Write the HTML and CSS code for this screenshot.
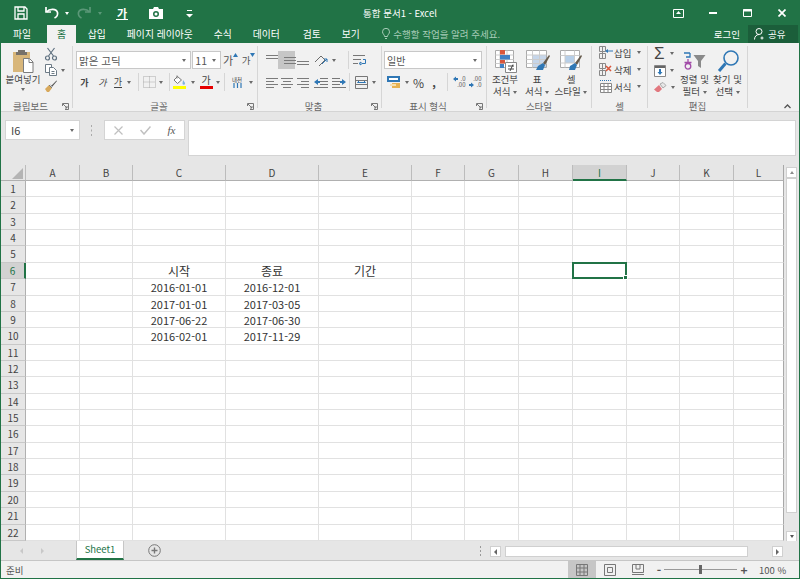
FILE: index.html
```html
<!DOCTYPE html>
<html lang="ko">
<head>
<meta charset="utf-8">
<title>통합 문서1 - Excel</title>
<link rel="stylesheet" href="styles.css">
</head>
<body>
<div class="window">
  <header class="titlebar">
    <div class="qat">
      <svg width="16" height="16" viewBox="0 0 16 16" fill="none" stroke="#fff" stroke-width="1.3"><path d="M2 2h10l2 2v10H2z"/><path d="M5 2v4h6V2M5 14V9h6v5"/></svg>
      <svg width="18" height="16" viewBox="0 0 18 16" fill="none" stroke="#fff" stroke-width="1.7"><path d="M3 2v5h5"/><path d="M3.500 7c3-3.500 10-3.500 11 .5.5 2.500-1 4.500-3 5.500"/></svg>
      <i class="caret white"></i>
      <svg width="18" height="16" viewBox="0 0 18 16" fill="none" stroke="#5b9878" stroke-width="1.7"><path d="M15 2v5h-5"/><path d="M14.500 7c-3-3.500-10-3.500-11 .5-.5 2.500 1 4.500 3 5.500"/></svg>
      <i class="caret faded"></i>
      <span class="qat-ga">가</span>
      <svg width="16" height="14" viewBox="0 0 16 14"><path fill="#fff" fill-rule="evenodd" d="M1 3h4l1-2h4l1 2h4v10H1zM8 5a3 3 0 1 0 0 6 3 3 0 0 0 0-6z"/><circle cx="8" cy="8" r="1.500" fill="#fff"/></svg>
      <svg width="7" height="9" viewBox="0 0 7 9"><path fill="#fff" d="M1 1h5v1H1zM0 5h7L3.500 8.500z"/></svg>
    </div>
    <div class="doc-title">통합 문서1 - Excel</div>
    <div class="winctl">
      <svg width="11" height="9" viewBox="0 0 11 9" fill="none" stroke="#fff"><path d="M.5.5h10v8H.5z"/><path fill="#fff" stroke="none" d="M5.500 2 8 5H3z"/></svg>
      <svg width="8" height="2" viewBox="0 0 8 2"><path fill="#fff" d="M0 0h8v2H0z"/></svg>
      <svg width="9" height="8" viewBox="0 0 9 8" fill="none" stroke="#fff"><path d="M.5.5h8v7h-8z"/><path stroke-width="2" d="M0 1.500h9"/></svg>
      <svg width="8" height="8" viewBox="0 0 8 8" fill="none" stroke="#fff" stroke-width="1.700"><path d="m.5.500 7 7M7.500.5l-7 7"/></svg>
    </div>
  </header>

  <nav class="tabs">
    <span class="tab t-file">파일</span>
    <span class="tab t-home">홈</span>
    <span class="tab t-ins">삽입</span>
    <span class="tab">페이지 레이아웃</span>
    <span class="tab">수식</span>
    <span class="tab">데이터</span>
    <span class="tab t-review">검토</span>
    <span class="tab">보기</span>
    <span class="tell">
      <svg width="8" height="12" viewBox="0 0 8 12" fill="none" stroke="#a9cdb9"><path d="M2.500 8.500C2.500 6.500.5 6 .5 3.800a3.500 3.500 0 0 1 7 0C7.500 6 5.500 6.500 5.500 8.500zM3 10.500h2"/></svg>
      수행할 작업을 알려 주세요.
    </span>
    <span class="login">로그인</span>
    <span class="share">
      <svg width="10" height="12" viewBox="0 0 10 12" fill="none" stroke="#fff"><circle cx="5" cy="3.500" r="3"/><path d="M.5 11.500c0-3 2-5 4.500-5M6.500 10h3M8 8.500v3"/></svg>
      공유
    </span>
  </nav>

  <section class="ribbon">
    <div class="grp g-clip">
      <div class="body row">
        <div class="paste">
          <svg width="22" height="24" viewBox="0 0 22 24"><path fill="#d8b67a" d="M1 3h17v20H1z"/><path fill="#77716a" d="M6 1h7v2h2v3H4V3h2z"/><path fill="#fff" stroke="#7d7d7d" d="M11.500 9.500h6l3.500 3.500v10.500h-9.500z"/><path fill="none" stroke="#7d7d7d" d="M17 9.500V13.500h4"/></svg>
          <span class="txt">붙여넣기</span>
          <i class="caret paste-caret"></i>
        </div>
        <div class="tools">
          <div class="tool"><svg width="14" height="14" viewBox="0 0 14 14" fill="none" stroke="#5f7180" stroke-width="1.200"><path d="M3.500 1 9.500 9M10.500 1l-6 8"/><circle cx="3.500" cy="11" r="2"/><circle cx="10.500" cy="11" r="2"/></svg></div>
          <div class="tool"><svg width="14" height="14" viewBox="0 0 14 14" fill="#fff" stroke="#6d7b86"><path d="M1.500 1.500h6v8h-6z"/><path d="M5.500 4.500h4l3 3v5h-7z"/><path d="M7.500 8.500h3M7.500 10.500h3"/></svg><i class="caret"></i></div>
          <div class="tool"><svg width="14" height="14" viewBox="0 0 14 14"><path fill="#d8a95c" d="m1 10 4-4 3 3-3 4H3z"/><path fill="#555" d="m6 5 1.500 1.500 5-5L13 2 8 8z"/><path stroke="#7a7a7a" d="M5 6l3 3" fill="none"/></svg></div>
        </div>
      </div>
      <div class="lbl with-launch">클립보드<svg class="launch" width="7" height="7" viewBox="0 0 7 7" fill="none" stroke="#777"><path d="M.5 3V.5h6v6H3"/><path d="M1 1l4 4M3 5h2V3"/></svg></div>
    </div>

    <div class="grp g-font">
      <div class="body stack">
        <div class="font-r1">
          <div class="combo c-name"><span>맑은 고딕</span><i class="caret"></i></div>
          <div class="combo c-size"><span>11</span><i class="caret"></i></div>
          <span class="grow">가<svg width="5" height="5" viewBox="0 0 5 5"><path fill="#2f77b5" d="M2.500 0 5 4H0z"/></svg></span>
          <span class="grow small">가<svg width="5" height="5" viewBox="0 0 5 5"><path fill="#2f77b5" d="M2.500 4 0 0h5z"/></svg></span>
        </div>
        <div class="font-r2">
          <b class="fx">가</b>
          <em class="fx">가</em>
          <span class="fx under">가</span>
          <i class="caret"></i>
          <i class="vsep"></i>
          <svg width="13" height="12" viewBox="0 0 13 12" fill="none" stroke="#aaa" stroke-dasharray="1 1"><path d="M.5.5h12v11H.5zM6.500.5v11M.5 6h12"/></svg>
          <i class="caret"></i>
          <i class="vsep"></i>
          <span class="fill">
            <svg width="13" height="10" viewBox="0 0 13 10" fill="none" stroke="#777"><path fill="#fff" d="M4.500 1.500 1 5l3.500 3.500L8.500 5z"/><path d="M4 .5v3"/><path fill="#7fb2de" stroke="none" d="M10 5c1 1.500 2 2.500 2 3.500a1 1 0 0 1-2.500 0c0-1 .5-2 .5-3.500z"/></svg>
            <i class="bar yellow"></i>
          </span>
          <i class="caret"></i>
          <span class="fill"><span class="fill-ga">가</span><i class="bar red"></i></span>
          <i class="caret"></i>
          <i class="vsep"></i>
          <span class="ruby">내천<svg width="11" height="5" viewBox="0 0 11 5" fill="none" stroke="#2f77b5" stroke-width="1.200"><path d="M2 0v5M5.500 0v5M9 0v5"/></svg></span>
          <i class="caret"></i>
        </div>
      </div>
      <div class="lbl with-launch">글꼴<svg class="launch" width="7" height="7" viewBox="0 0 7 7" fill="none" stroke="#777"><path d="M.5 3V.5h6v6H3"/><path d="M1 1l4 4M3 5h2V3"/></svg></div>
    </div>

    <div class="grp g-align">
      <div class="body stack">
        <div class="align-r1">
          <svg class="lines" width="12" height="12" viewBox="0 0 12 12"><path d="M0 1.500h12M0 4.500h12"/></svg>
          <span class="on"><svg class="lines" width="12" height="12" viewBox="0 0 12 12"><path d="M0 3.500h12M0 6.500h12M0 9.500h12"/></svg></span>
          <svg class="lines" width="12" height="12" viewBox="0 0 12 12"><path d="M0 7.500h12M0 10.500h12"/></svg>
          <svg width="14" height="12" viewBox="0 0 14 12" fill="none" stroke="#6b6b6b"><path d="M1 8 7 2l4 4-6 6"/><path stroke="#2f77b5" d="m8 10 5-5M13 8V5h-3"/></svg>
          <i class="caret"></i>
          <i class="vsep"></i>
          <svg width="14" height="12" viewBox="0 0 14 12" fill="none" stroke="#777"><path d="M0 1.500h12M0 5.500h8M0 9.500h5"/><path stroke="#2f77b5" d="M9 9.500h3.500v-4H10M6 9.500l2-1.500v3z"/></svg>
        </div>
        <div class="align-r2">
          <svg class="lines" width="12" height="11" viewBox="0 0 12 11"><path d="M0 1.500h12M0 4.500h8M0 7.500h12M0 10.500h8"/></svg>
          <svg class="lines" width="12" height="11" viewBox="0 0 12 11"><path d="M0 1.500h12M2 4.500h8M0 7.500h12M2 10.500h8"/></svg>
          <svg class="lines" width="12" height="11" viewBox="0 0 12 11"><path d="M0 1.500h12M4 4.500h8M0 7.500h12M4 10.500h8"/></svg>
          <svg width="14" height="11" viewBox="0 0 14 11"><path stroke="#777" fill="none" d="M6 1.500h8M6 4.500h8M6 7.500h8M0 10.500h14"/><path fill="#2f77b5" d="M0 5l4-3v2h2v2H4v2z"/></svg>
          <svg width="14" height="11" viewBox="0 0 14 11"><path stroke="#777" fill="none" d="M0 1.500h8M0 4.500h8M0 7.500h8M0 10.500h14"/><path fill="#2f77b5" d="m14 5-4-3v2H8v2h2v2z"/></svg>
          <i class="vsep"></i>
          <svg width="13" height="13" viewBox="0 0 13 13" fill="none" stroke="#777"><path d="M.5.5h12v12H.5zM.5 4.500h12M.5 8.500h12"/><path stroke="#2f77b5" d="M2.500 6.500h8M2.500 6.500 4 5M10.500 6.500 9 5"/></svg>
          <i class="caret"></i>
        </div>
      </div>
      <div class="lbl with-launch">맞춤<svg class="launch" width="7" height="7" viewBox="0 0 7 7" fill="none" stroke="#777"><path d="M.5 3V.5h6v6H3"/><path d="M1 1l4 4M3 5h2V3"/></svg></div>
    </div>

    <div class="grp g-num">
      <div class="body stack">
        <div class="combo c-fmt"><span>일반</span><i class="caret"></i></div>
        <div class="num-r2">
          <svg width="14" height="14" viewBox="0 0 14 14"><path fill="#2f77b5" d="M0 1h13v6H0z"/><path fill="#fff" d="M2 3h9v2H2z"/><path fill="#e6b252" d="M5 8h8v5H5z"/><path fill="#f7dfae" d="M3 9h6v2H3z"/></svg>
          <i class="caret"></i>
          <span class="pct">%</span>
          <span class="comma">,</span>
          <i class="vsep"></i>
          <span class="dec"><svg width="13" height="12" viewBox="0 0 13 12"><path fill="#2f77b5" d="M0 3l3-2.500V2h2v2H3v1.500z"/></svg><span class="dec-t"><span>.0</span><span>.00</span></span></span>
          <span class="dec"><svg width="13" height="12" viewBox="0 0 13 12"><path fill="#2f77b5" d="M5 9 2 6.500V8H0v2h2v1.500z"/></svg><span class="dec-t"><span>.00</span><span>.0</span></span></span>
        </div>
      </div>
      <div class="lbl with-launch">표시 형식<svg class="launch" width="7" height="7" viewBox="0 0 7 7" fill="none" stroke="#777"><path d="M.5 3V.5h6v6H3"/><path d="M1 1l4 4M3 5h2V3"/></svg></div>
    </div>

    <div class="grp g-style">
      <div class="body row">
        <div class="big b-cond">
          <svg width="24" height="24" viewBox="0 0 24 24"><path fill="#fff" stroke="#aaa" d="M2.500 1.500h18v17h-18z"/><path stroke="#ccc" fill="none" d="M7 1.500v17M14 1.500v17M2.500 6h18M2.500 10.500h18M2.500 14.500h18"/><path fill="#d8573d" d="M7 1h5v4.500H7zM7 11h5v3.500H7z"/><path fill="#3f80c4" d="M7 6h10v4.500H7zM7 15h4v4H7z"/><path fill="#fff" stroke="#888" d="M12.500 13.500h11v10h-11z"/><path stroke="#444" fill="none" d="M15 17h6M15 20h6M20 15.500l-3 6.500"/></svg>
          <span class="txt">조건부</span><span class="txt">서식 <i class="caret"></i></span>
        </div>
        <div class="big b-table">
          <svg width="28" height="24" viewBox="0 0 28 24"><path fill="#fff" stroke="#aaa" d="M3.500 1.500h20v17h-20z"/><path fill="#c6d6ea" d="M10 6h13v12H10z"/><path stroke="#ccc" fill="none" d="M9.500 1.500v17M16.500 1.500v17M3.500 6h20M3.500 10.500h20M3.500 14.500h20"/><path fill="#665b4d" d="M20 14l6-8 1 1-5 9z"/><path fill="#2f77b5" d="M15 17l5-3 2 2-2 5h-7z"/></svg>
          <span class="txt">표</span><span class="txt">서식 <i class="caret"></i></span>
        </div>
        <div class="big b-cell">
          <svg width="24" height="24" viewBox="0 0 24 24"><path fill="#fff" stroke="#aaa" d="M1.500 1.500h19v17h-19z"/><path fill="#b7cfe8" d="M6 7h10v7H6z"/><path stroke="#ccc" fill="none" d="M6 1.500v17M15.500 1.500v17M1.500 6.500h19M1.500 14h19"/><path fill="#665b4d" d="M16 14l6-8 1 1-5 9z"/><path fill="#2f77b5" d="M11 17l5-3 2 2-2 5h-6z"/></svg>
          <span class="txt">셀</span><span class="txt">스타일 <i class="caret"></i></span>
        </div>
      </div>
      <div class="lbl">스타일</div>
    </div>

    <div class="grp g-cells">
      <div class="body stack">
        <div class="cellrow"><svg width="14" height="13" viewBox="0 0 14 13" fill="none" stroke="#888"><path d="M.5.5h6v5h-6zM.5 7.500h6v5h-6zM3.500.5v12"/><path fill="#2f77b5" stroke="none" d="m6 5 3-2v1.500h5v1H9V7z"/></svg><span class="txt">삽입</span><i class="caret"></i></div>
        <div class="cellrow"><svg width="14" height="13" viewBox="0 0 14 13" fill="none" stroke="#888"><path d="M.5.5h6v5h-6zM.5 7.500h6v5h-6zM3.500.5v12"/><path stroke="#d8573d" stroke-width="1.600" d="m7 3 5 5M12 3 7 8"/></svg><span class="txt">삭제</span><i class="caret"></i></div>
        <div class="cellrow"><svg width="14" height="13" viewBox="0 0 14 13" fill="none" stroke="#888"><path fill="#fff" d="M1.500 3.500h11v9h-11zM1.500 6.500h11M1.500 9.500h11M5 3.500v9M9 3.500v9"/><path stroke="#2f77b5" stroke-dasharray="1 1" d="M1 .5h12"/></svg><span class="txt">서식</span><i class="caret"></i></div>
      </div>
      <div class="lbl">셀</div>
    </div>

    <div class="grp g-edit">
      <div class="body row">
        <div class="edit-tools">
          <div class="etool"><span class="sigma">Σ</span><i class="caret"></i></div>
          <div class="etool"><svg width="12" height="12" viewBox="0 0 12 12"><path fill="#fff" stroke="#888" d="M.5.5h11v11H.5z"/><path fill="#666" d="M1 1h10v2H1z"/><path fill="#2f77b5" d="M5 4h2v3h1.500L6 10 3.500 7H5z"/></svg><i class="caret"></i></div>
          <div class="etool"><svg width="13" height="11" viewBox="0 0 13 11"><path fill="#e2787f" d="M5 3l3 4-3 3H3L0 7.500z"/><path fill="#e7e7e7" stroke="#aaa" d="M6 2 9 .5l3 3L9 6z"/></svg><i class="caret"></i></div>
        </div>
        <div class="big b-sort">
          <svg width="24" height="24" viewBox="0 0 24 24"><path fill="none" stroke="#2f77b5" stroke-width="1.300" d="M1 4h6M7 4v4H3"/><path fill="none" stroke="#a24ca8" stroke-width="1.300" d="M5 10v3M1.500 13.500h7M5 14.500a2.800 2.800 0 1 1 0 5.600 2.800 2.800 0 0 1 0-5.600z"/><path fill="#8a8a8a" d="M10.500 6h12l-4.500 6v7l-3-2v-5z"/></svg>
          <span class="txt">정렬 및</span><span class="txt">필터 <i class="caret"></i></span>
        </div>
        <div class="big b-find">
          <svg width="24" height="24" viewBox="0 0 24 24" fill="none" stroke="#2f77b5"><circle cx="15" cy="9" r="7" stroke-width="1.600"/><path stroke-width="3" d="M9.500 14.500 3 22"/></svg>
          <span class="txt">찾기 및</span><span class="txt">선택 <i class="caret"></i></span>
        </div>
      </div>
      <div class="lbl">편집</div>
    </div>

    <svg class="collapse" width="7" height="5" viewBox="0 0 7 5" fill="none" stroke="#555" stroke-width="1.300"><path d="m.5 4 3-3 3 3"/></svg>
  </section>

  <section class="formula">
    <div class="namebox"><span>I6</span><i class="caret"></i></div>
    <svg class="dots" width="3" height="11" viewBox="0 0 3 11"><path fill="#aaa" d="M1 0h1v2H1zM1 4.500h1v2H1zM1 9h1v2H1z"/></svg>
    <div class="fbtns">
      <svg width="9" height="9" viewBox="0 0 9 9" fill="none" stroke="#c0c0c0" stroke-width="1.200"><path d="m.5.500 8 8M8.500.5l-8 8"/></svg>
      <svg width="11" height="9" viewBox="0 0 11 9" fill="none" stroke="#c0c0c0" stroke-width="1.500"><path d="m.5 4 3.500 4 6.500-7.500"/></svg>
      <span class="fxlabel">fx</span>
    </div>
    <div class="finput"></div>
  </section>

  <section class="sheetwrap">
    <div class="sheet">
      <div class="ch corner"><svg width="11" height="11" viewBox="0 0 11 11"><path fill="#b4b4b4" d="M11 0v11H0z"/></svg></div>
      <div class="ch">A</div><div class="ch">B</div><div class="ch">C</div><div class="ch">D</div><div class="ch">E</div><div class="ch">F</div><div class="ch">G</div><div class="ch">H</div><div class="ch act">I</div><div class="ch">J</div><div class="ch">K</div><div class="ch">L</div>
      <div class="rh">1</div><div></div><div></div><div></div><div></div><div></div><div></div><div></div><div></div><div></div><div></div><div></div><div></div>
      <div class="rh">2</div><div></div><div></div><div></div><div></div><div></div><div></div><div></div><div></div><div></div><div></div><div></div><div></div>
      <div class="rh">3</div><div></div><div></div><div></div><div></div><div></div><div></div><div></div><div></div><div></div><div></div><div></div><div></div>
      <div class="rh">4</div><div></div><div></div><div></div><div></div><div></div><div></div><div></div><div></div><div></div><div></div><div></div><div></div>
      <div class="rh">5</div><div></div><div></div><div></div><div></div><div></div><div></div><div></div><div></div><div></div><div></div><div></div><div></div>
      <div class="rh act">6</div><div></div><div></div><div class="ko">시작</div><div class="ko">종료</div><div class="ko">기간</div><div></div><div></div><div></div><div class="cur"><span class="sel"><span class="handle"></span></span></div><div></div><div></div><div></div>
      <div class="rh">7</div><div></div><div></div><div>2016-01-01</div><div>2016-12-01</div><div></div><div></div><div></div><div></div><div></div><div></div><div></div><div></div>
      <div class="rh">8</div><div></div><div></div><div>2017-01-01</div><div>2017-03-05</div><div></div><div></div><div></div><div></div><div></div><div></div><div></div><div></div>
      <div class="rh">9</div><div></div><div></div><div>2017-06-22</div><div>2017-06-30</div><div></div><div></div><div></div><div></div><div></div><div></div><div></div><div></div>
      <div class="rh">10</div><div></div><div></div><div>2016-02-01</div><div>2017-11-29</div><div></div><div></div><div></div><div></div><div></div><div></div><div></div><div></div>
      <div class="rh">11</div><div></div><div></div><div></div><div></div><div></div><div></div><div></div><div></div><div></div><div></div><div></div><div></div>
      <div class="rh">12</div><div></div><div></div><div></div><div></div><div></div><div></div><div></div><div></div><div></div><div></div><div></div><div></div>
      <div class="rh">13</div><div></div><div></div><div></div><div></div><div></div><div></div><div></div><div></div><div></div><div></div><div></div><div></div>
      <div class="rh">14</div><div></div><div></div><div></div><div></div><div></div><div></div><div></div><div></div><div></div><div></div><div></div><div></div>
      <div class="rh">15</div><div></div><div></div><div></div><div></div><div></div><div></div><div></div><div></div><div></div><div></div><div></div><div></div>
      <div class="rh">16</div><div></div><div></div><div></div><div></div><div></div><div></div><div></div><div></div><div></div><div></div><div></div><div></div>
      <div class="rh">17</div><div></div><div></div><div></div><div></div><div></div><div></div><div></div><div></div><div></div><div></div><div></div><div></div>
      <div class="rh">18</div><div></div><div></div><div></div><div></div><div></div><div></div><div></div><div></div><div></div><div></div><div></div><div></div>
      <div class="rh">19</div><div></div><div></div><div></div><div></div><div></div><div></div><div></div><div></div><div></div><div></div><div></div><div></div>
      <div class="rh">20</div><div></div><div></div><div></div><div></div><div></div><div></div><div></div><div></div><div></div><div></div><div></div><div></div>
      <div class="rh">21</div><div></div><div></div><div></div><div></div><div></div><div></div><div></div><div></div><div></div><div></div><div></div><div></div>
      <div class="rh">22</div><div></div><div></div><div></div><div></div><div></div><div></div><div></div><div></div><div></div><div></div><div></div><div></div>
    </div>
    <div class="vscroll">
      <div class="sbtn"><i class="caret up"></i></div>
      <div class="thumb"></div>
      <div class="sbtn"><i class="caret dark"></i></div>
    </div>
  </section>

  <section class="sheetbar">
    <span class="nav"><i class="arrow left"></i><i class="arrow right"></i></span>
    <span class="sheettab">Sheet1</span>
    <svg class="addsheet" width="13" height="13" viewBox="0 0 13 13" fill="none" stroke="#777"><circle cx="6.500" cy="6.500" r="5.800"/><path stroke-width="1.400" d="M3.500 6.500h6M6.500 3.500v6"/></svg>
    <svg class="hdots" width="3" height="10" viewBox="0 0 3 10"><path fill="#999" d="M1 0h1v2H1zM1 4h1v2H1zM1 8h1v2H1z"/></svg>
    <div class="hscroll">
      <span class="hbtn"><i class="arrow left dark"></i></span>
      <span class="hthumb"></span>
      <span class="hbtn"><i class="arrow right dark"></i></span>
    </div>
  </section>

  <footer class="status">
    <span class="ready">준비</span>
    <span class="view on-view"><svg width="12" height="12" viewBox="0 0 12 12" fill="none" stroke="#777"><path d="M.5.5h11v11H.5zM4 .5v11M8 .5v11M.5 4h11M.5 8h11"/></svg></span>
    <span class="view"><svg width="12" height="12" viewBox="0 0 12 12" fill="none" stroke="#777"><path d="M.5.5h11v11H.5z"/><path d="M3.500 3.500h5v5h-5z"/></svg></span>
    <span class="view"><svg width="12" height="11" viewBox="0 0 12 11" fill="none" stroke="#777"><path d="M.5 8.500V.5h11v8zM4 .5v4.500h4V.5M0 10.500h12"/></svg></span>
    <span class="zoomctl">
      <span class="zm">-</span>
      <span class="slider"><span class="knob"></span></span>
      <span class="zm">+</span>
    </span>
    <span class="pctval">100 %</span>
  </footer>
</div>
</body>
</html>
```
FILE: styles.css
```css
* { box-sizing: border-box; }
html, body { margin: 0; padding: 0; width: 800px; height: 579px; overflow: hidden; }
body { font-family: "Noto Sans CJK KR", "Noto Sans", sans-serif; color: #444; font-size: 9.5px; }
i { font-style: normal; display: block; }
svg { display: block; flex: none; }

.window { width: 800px; height: 579px; border: 1px solid #217346; display: flex; flex-direction: column; background: #f1f1f1; }

.caret { width: 0; height: 0; border-left: 2.5px solid transparent; border-right: 2.5px solid transparent; border-top: 3px solid #6a6a6a; display: inline-block; vertical-align: middle; }
.caret.white { border-top-color: #fff; }
.caret.faded { border-top-color: #5b9878; }
.caret.up { border-top: 0; border-bottom: 3px solid #8c8c8c; }
.caret.dark { border-top-color: #555; }

/* title bar */
.titlebar { height: 24px; background: #217346; display: grid; grid-template-columns: 1fr auto 1fr; align-items: center; color: #fff; flex: none; }
.qat { display: grid; grid-template-columns: 40px 22px 8px 26px 6px 38px 30px 36px; justify-items: center; align-items: center; height: 24px; }
.qat-ga { font-size: 11px; line-height: 12px; color: #fff; border-bottom: 1px solid #fff; font-weight: 700; padding: 0 1px; }
.doc-title { font-size: 9.5px; color: #fff; }
.winctl { display: grid; grid-template-columns: repeat(4, 34.5px); justify-items: center; align-items: center; justify-content: end; }

/* tabs */
.tabs { height: 18px; background: #217346; display: flex; align-items: stretch; flex: none; color: #fff; font-size: 9.8px; line-height: 18px; }
.tab { padding: 0 10.5px; white-space: nowrap; }
.t-file { padding: 0 16px 0 12px; }
.t-home { padding: 0 9.9px; background: #f1f1f1; color: #217346; }
.t-ins { padding-left: 12px; }
.t-review { margin-left: 2px; }
.tell { display: flex; align-items: center; gap: 3px; margin-left: 12px; color: #a9cdb9; font-size: 9.5px; white-space: nowrap; }
.login { margin-left: auto; margin-right: 8px; font-size: 9.5px; }
.share { width: 50px; margin-right: 1px; background: #1b5e3a; display: flex; align-items: center; gap: 4px; padding-left: 6px; font-size: 9.5px; }

/* ribbon */
.ribbon { height: 69px; flex: none; background: #f1f1f1; display: flex; padding-top: 3px; border-bottom: 1px solid #d4d4d4; position: relative; }
.grp { height: 62px; border-right: 1px solid #d6d6d6; flex: none; display: flex; flex-direction: column; }
.g-clip { width: 72px; }
.g-font { width: 185px; }
.g-align { width: 124px; }
.g-num { width: 105px; }
.g-style { width: 105px; }
.g-cells { width: 56px; }
.g-edit { width: 100px; }
.body { height: 53px; }
.body.row { display: flex; }
.body.stack { display: flex; flex-direction: column; padding-top: 5px; }
.g-cells .body.stack { padding-top: 0; }
.lbl { position: relative; height: 9px; line-height: 14px; text-align: center; color: #666; font-size: 9.5px; white-space: nowrap; }
.with-launch { padding-right: 12px; }
.launch { position: absolute; right: 3px; top: 4px; }
.txt { display: block; line-height: 12px; font-size: 9.5px; white-space: nowrap; text-align: center; }

.paste { width: 44px; padding-top: 3px; display: flex; flex-direction: column; align-items: center; }
.paste-caret { margin-top: 3px; }
.tools { display: flex; flex-direction: column; margin-left: -1px; }
.tool { height: 16px; display: flex; align-items: center; gap: 3px; }

.font-r1 { display: flex; align-items: center; height: 18px; margin-left: 3px; gap: 1px; }
.combo { background: #fff; border: 1px solid #c8c8c8; height: 18px; display: flex; align-items: center; justify-content: space-between; padding: 0 4px 0 2px; font-size: 10.5px; color: #555; }
.c-name { width: 116px; }
.c-size { width: 29px; }
.c-fmt { width: 98px; margin-left: 2px; font-size: 10px; }
.grow { display: flex; width: 17px; justify-content: center; font-size: 11px; line-height: 14px; color: #555; }
.grow.small { font-size: 9.5px; }
.font-r2 { margin: 4px 0 0 3px; height: 18px; display: grid; grid-template-columns: 17px 19px 12px 10px 8px 14px 10px 6px 15px 11px 16px 8px 4px 22px 6px; justify-items: center; align-items: center; }
.fx { font-size: 9px; color: #444; font-style: normal; }
.under { border-bottom: 1px solid #444; line-height: 11px; }
em.fx { font-style: italic; }
.fill { display: flex; flex-direction: column; align-items: center; gap: 1px; }
.fill-ga { font-size: 10px; line-height: 10px; }
.bar { width: 13px; height: 3px; }
.yellow { background: #ffff00; }
.red { background: #e60000; }
.vsep { width: 1px; height: 18px; background: #d6d6d6; }
.ruby { font-size: 5.500px; line-height: 6px; display: flex; flex-direction: column; align-items: center; white-space: nowrap; }

.align-r1, .align-r2 { display: grid; align-items: center; justify-items: center; height: 18px; padding-left: 1px; }
.align-r1 { grid-template-columns: 19px 17px 16px 20px 5px 13px 22px; }
.align-r1 svg:first-child, .align-r2 svg:first-child { margin-left: 6px; }
.align-r1 .vsep { justify-self: end; }
.align-r2 { margin-top: 4px; grid-template-columns: 19px 17px 16px 20px 16px 4px 20px 6px; }
.lines { fill: none; stroke: #7b7b7b; }
.on { width: 17px; height: 18px; background: #c6c6c6; display: flex; align-items: center; justify-content: center; }

.num-r2 { margin-top: 4px; height: 18px; display: grid; padding-left: 3px; justify-items: center; align-items: center; grid-template-columns: 17px 9px 15px 16px 10px 14px 18px; }
.pct { font-size: 12px; color: #444; }
.comma { font-size: 11px; font-weight: 700; line-height: 10px; }
.dec { position: relative; display: block; width: 13px; height: 12px; }
.dec-t { position: absolute; right: 0; top: 0; display: flex; flex-direction: column; align-items: flex-end; font-size: 6px; line-height: 6px; color: #555; }

.big { display: flex; flex-direction: column; align-items: center; padding-top: 3px; flex: none; }
.big svg { height: 24px; }
.b-cond { width: 36px; }
.b-table { width: 28px; }
.b-cell { width: 40px; }
.b-sort, .b-find { width: 33px; }

.cellrow { height: 17px; display: grid; grid-template-columns: 15px 23px 6px; padding-left: 7px; align-items: center; justify-items: start; }
.cellrow:first-child { margin-top: -2px; }
.edit-tools { width: 30px; padding-left: 6px; display: flex; flex-direction: column; }
.etool { height: 17px; display: flex; align-items: center; gap: 4px; }
.etool:first-child { margin-top: -1px; }
.sigma { font-size: 17px; line-height: 15px; width: 12px; color: #444; font-family: "Liberation Sans", sans-serif; }
.collapse { position: absolute; right: 8px; top: 61px; }

/* formula bar */
.formula { height: 53px; flex: none; background: #e6e6e6; display: flex; padding: 8px 3px 0 4px; }
.namebox { width: 75px; height: 20px; background: #fff; border: 1px solid #d4d4d4; display: flex; align-items: center; justify-content: space-between; padding: 0 5px; font-size: 11px; color: #444; }
.dots { margin: 5px 11px 0 10px; }
.fbtns { width: 81px; height: 20px; background: #fff; border: 1px solid #d4d4d4; display: grid; grid-template-columns: 27px 27px 25px; justify-items: center; align-items: center; }
.fxlabel { font-family: "Liberation Serif", serif; font-style: italic; font-size: 11px; line-height: 12px; color: #555; }
.finput { width: 609px; height: 36px; margin-left: 3px; background: #fff; border: 1px solid #d4d4d4; }

/* sheet */
.sheetwrap { height: 376px; flex: none; display: flex; background: #e6e6e6; }
.sheet { width: 783px; height: 376px; display: grid; grid-template-columns: 25px 54px 53px 93px 93px 93px 53px 54px 54px 54px 53px 54px 50px; grid-template-rows: 16px repeat(22, 16.364px); background: #fff; font-size: 11px; line-height: 16px; color: #333; text-align: center; border-bottom: 1px solid #a8a8a8; }
.sheet > div { border-right: 1px solid #e1e1e1; border-bottom: 1px solid #e1e1e1; white-space: nowrap; }
.sheet > div:nth-child(13n) { border-right-color: #a8a8a8; }
.sheet > .ko { font-size: 12px; }
.sheet > .ch { background: #e6e6e6; border-right: 1px solid #bcbcbc; border-bottom: 1px solid #b0b0b0; font-size: 10px; color: #444; line-height: 15px; }
.sheet > .corner { display: flex; justify-content: flex-end; align-items: flex-end; padding: 0 2px 1px 0; }
.sheet > .rh { background: #e6e6e6; border-right: 1px solid #b0b0b0; border-bottom: 1px solid #c8c8c8; font-size: 10px; color: #444; line-height: 16px; }
.sheet > .ch.act { background: #d2d2d2; border-bottom: 2px solid #217346; color: #217346; }
.sheet > .rh.act { background: #d2d2d2; border-right: 2px solid #217346; color: #217346; }
.cur { position: relative; }
.sel { position: absolute; left: -1px; top: -1px; right: -1px; bottom: -1px; border: 2px solid #217346; }
.handle { position: absolute; right: -3px; bottom: -3px; width: 5px; height: 5px; background: #217346; border: 1px solid #fff; }

.vscroll { width: 15px; padding: 2px 1px 0 2px; display: flex; flex-direction: column; background: #e6e6e6; }
.sbtn { width: 11px; height: 11px; background: #fff; border: 1px solid #d0d0d0; display: flex; align-items: center; justify-content: center; flex: none; }
.thumb { height: 335px; width: 11px; background: #fff; border: 1px solid #d0d0d0; margin-bottom: 18px; flex: none; }

/* sheet tabs */
.sheetbar { height: 20px; flex: none; background: #e6e6e6; display: flex; align-items: flex-start; border-bottom: 1px solid #c6c6c6; }
.nav { width: 75px; height: 19px; display: flex; align-items: center; padding-left: 19px; gap: 18px; }
.arrow { width: 0; height: 0; border-top: 3px solid transparent; border-bottom: 3px solid transparent; }
.arrow.left { border-right: 3px solid #c8c8c8; }
.arrow.right { border-left: 3px solid #c8c8c8; }
.arrow.left.dark { border-right-color: #666; }
.arrow.right.dark { border-left-color: #666; }
.sheettab { width: 48px; height: 19px; background: #fff; color: #217346; text-align: center; font-size: 9.5px; line-height: 16px; border-left: 1px solid #c6c6c6; border-right: 1px solid #c6c6c6; border-bottom: 2px solid #217346; }
.addsheet { margin: 3px 0 0 24px; }
.hdots { margin: 5px 0 0 318px; }
.hscroll { margin: 5px 0 0 8px; display: flex; height: 11px; width: 293px; }
.hbtn { width: 11px; height: 11px; background: #fff; border: 1px solid #d0d0d0; display: flex; align-items: center; justify-content: center; flex: none; }
.hthumb { width: 243px; height: 11px; background: #fff; border: 1px solid #d0d0d0; margin: 0 24px 0 4px; flex: none; }

/* status */
.status { height: 17px; flex: none; background: #f1f1f1; display: flex; align-items: center; font-size: 9.5px; color: #555; }
.ready { width: 567px; padding-left: 5px; }
.view { width: 28px; height: 17px; display: flex; align-items: center; justify-content: center; }
.on-view { background: #c6c6c6; }
.zoomctl { display: flex; align-items: center; margin-left: 3px; width: 94px; gap: 1px; }
.zm { font-size: 12px; line-height: 12px; width: 8px; text-align: center; color: #555; font-weight: 700; }
.slider { position: relative; width: 73px; height: 1px; background: #999; margin-right: 2px; }
.knob { position: absolute; left: 35px; top: -4px; width: 3px; height: 9px; background: #666; }
.pctval { margin-left: 10px; font-size: 9.5px; white-space: nowrap; }
```
